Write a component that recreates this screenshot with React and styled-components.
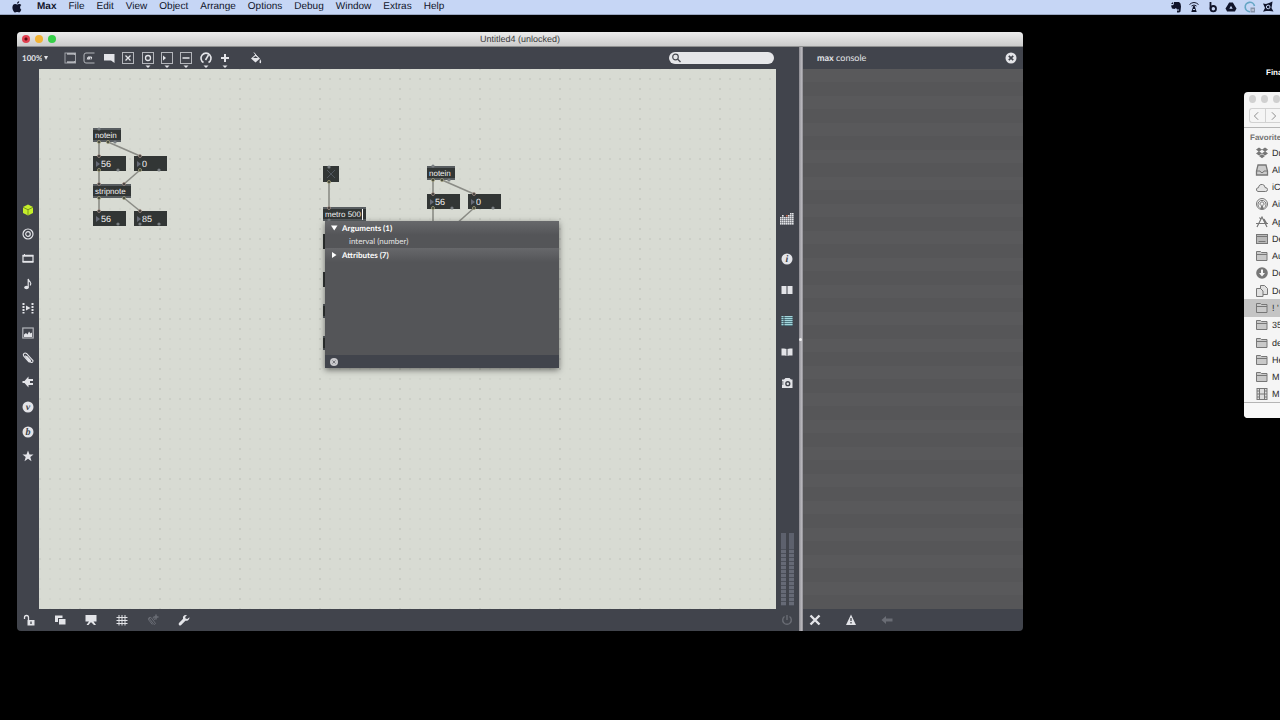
import React from "react";
import styled, { createGlobalStyle, css } from "styled-components";

const color = {
  chrome: "#41444c",
  canvas: "#d8dbd3",
  icon: "#e3e4e8",
  dim: "#6a6d75",
  node: "#323635",
  nodeEdge: "#585d60",
};
const helvetica = '"Liberation Sans", Arial, sans-serif';
const lato = 'Lato, "Open Sans", sans-serif';

const GlobalStyle = createGlobalStyle`
  * { box-sizing: border-box; }
  body { margin: 0; background: #000; font-family: ${helvetica}; overflow: hidden; text-rendering: geometricPrecision; }
  button, input, select { font: inherit; color: inherit; margin: 0; padding: 0; border: 0; background: none; outline: none; text-rendering: inherit; }
  ul { list-style: none; margin: 0; padding: 0; }
`;

const Screen = styled.div`
  display: flex;
  flex-direction: column;
  height: 100vh;
`;

/* ---------- system menu bar ---------- */
const MenuBar = styled.header`
  display: flex;
  justify-content: space-between;
  align-items: center;
  height: 15px;
  flex: none;
  padding: 0 4px 0 9px;
  background: #c6d6f5;
  border-bottom: 1px solid #9aa7c2;
  color: #10142a;
`;
const Menus = styled.nav`
  display: flex;
  align-items: center;
  gap: 12px;
  font-size: 10px;
  line-height: 14px;
`;
const MenuItem = styled.button`
  font-weight: ${(p) => (p.$app ? 700 : 400)};
  line-height: 14px;
`;
const StatusItems = styled.div`
  display: flex;
  justify-content: space-between;
  width: 108px;
`;

/* ---------- desktop ---------- */
const Desktop = styled.main`
  display: flex;
  flex: 1;
  min-height: 0;
  padding: 17px 0 89px 17px;
  gap: 221px;
`;
const Window = styled.section`
  display: flex;
  flex-direction: column;
  flex: 1;
  min-width: 0;
  border-radius: 4px;
  overflow: hidden;
  background: ${color.chrome};
`;
const TitleBar = styled.div`
  display: grid;
  grid-template-columns: 60px 1fr 60px;
  align-items: center;
  height: 15px;
  flex: none;
  background: linear-gradient(#ececec, #cbcbcb);
  border-bottom: 1px solid #8f9090;
`;
const Lights = styled.div`
  display: flex;
  gap: 5px;
  padding-left: 5px;
`;
const Light = styled.button`
  width: 8px;
  height: 8px;
  border-radius: 50%;
  background: ${(p) => p.$c};
  ${(p) => p.$dot && css`background: radial-gradient(circle, #5c0b12 0 1px, ${p.$c} 2px);`}
`;
const Title = styled.h1`
  margin: 0;
  font-size: 9px;
  line-height: 14px;
  font-weight: 400;
  color: #3c3c3c;
  text-align: center;
`;
const WindowBody = styled.div`
  display: flex;
  flex: 1;
  min-height: 0;
`;
const Patcher = styled.div`
  display: flex;
  flex-direction: column;
  flex: 1;
  min-width: 0;
`;
const Toolbar = styled.div`
  display: flex;
  align-items: center;
  height: 22px;
  flex: none;
  padding: 0 25px 0 5px;
  color: ${color.icon};
`;
const ZoomSelect = styled.select`
  appearance: none;
  width: 20px;
  font: 700 8px/12px ${lato};
`;
const ZoomCaret = styled.span`
  border: 2px solid transparent;
  border-top: 4px solid ${color.icon};
  border-bottom: 0;
  margin-left: 2px;
`;
const ObjectTools = styled.div`
  display: flex;
  justify-content: space-between;
  width: 171px;
  margin: 0 15px 0 14px;
`;
const IconButton = styled.button`
  display: block;
  width: 16px;
  height: 16px;
  flex: none;
  color: ${(p) => p.$c || "inherit"};
  svg { display: block; overflow: visible; }
`;
const SearchBox = styled.label`
  display: flex;
  align-items: center;
  width: 105px;
  height: 12px;
  margin-left: auto;
  border-radius: 6px;
  background: #e6e7e9;
  color: #4a4c52;
  svg { flex: none; }
  input { width: 80px; font-size: 8px; }
`;
const Middle = styled.div`
  display: flex;
  flex: 1;
  min-height: 0;
`;
const LeftBar = styled.div`
  display: flex;
  flex-direction: column;
  justify-content: center;
  align-items: center;
  width: 22px;
  padding-bottom: 12px;
  color: ${color.icon};
`;
const LeftTools = styled.div`
  display: flex;
  flex-direction: column;
  justify-content: space-between;
  height: 263px;
`;
const RightBar = styled.div`
  display: flex;
  flex-direction: column;
  align-items: center;
  width: 23px;
  padding: 142px 1px 3px 0;
  color: ${color.icon};
`;
const RightTools = styled.div`
  display: flex;
  flex-direction: column;
  gap: 15px;
  margin: 24px 0 auto;
`;
const Meters = styled.div`
  display: flex;
  gap: 3px;
`;
const Meter = styled.div`
  width: 5px;
  height: 73px;
  background:
    linear-gradient(#5d616d, #5d616d) 0 0 / 100% 16px no-repeat,
    repeating-linear-gradient(#4b4f59 0 1px, #666a76 1px 4px);
`;
const BottomBar = styled.div`
  display: flex;
  align-items: center;
  height: 22px;
  flex: none;
  gap: ${(p) => p.$gap}px;
  padding: 0 4px;
  color: ${color.icon};
`;
const Spacer = styled.span`
  flex: 1;
`;

/* ---------- patcher canvas ---------- */
const Canvas = styled.div`
  position: relative;
  flex: 1;
  overflow: hidden;
  background:
    radial-gradient(circle at 1px 1px, #c9ccc4 0 1px, transparent 1px) 40px 9px / 80px 10px,
    radial-gradient(circle at 1px 1px, #cccfc7 0 1px, transparent 1px) 0 9px / 10px 80px,
    radial-gradient(circle at 1px 1px, #d2d5cd 0 1px, transparent 1px) 0 9px / 10px 10px,
    ${color.canvas};
`;
const Cords = styled.svg`
  position: absolute;
  inset: 0;
  width: 100%;
  height: 100%;
`;
const placed = css`
  position: absolute;
  left: ${(p) => p.$x}px;
  top: ${(p) => p.$y}px;
`;
const ObjectBox = styled.div`
  ${placed}
  width: ${(p) => p.$w}px;
  height: 14px;
  padding-left: 2px;
  border: solid ${color.nodeEdge};
  border-width: 2px 0;
  background: ${color.node};
  color: #f2f2f2;
  font-size: 8px;
  line-height: 12px;
  white-space: nowrap;
`;
const ObjectInput = styled.input`
  display: block;
  width: 38px;
  height: 11px;
  border-right: 1px solid #fff;
`;
const NumberBox = styled.label`
  ${placed}
  display: flex;
  align-items: center;
  width: 33px;
  height: 15px;
  background: ${color.node};
  color: #f2f2f2;
  font-size: 9px;
  input { width: 24px; height: 12px; }
  &::before {
    content: "";
    margin: 0 1px 0 3px;
    border: 3px solid transparent;
    border-left: 4px solid #666a76;
    border-right: 0;
  }
`;
const ToggleBox = styled.button`
  ${placed}
  width: 16px;
  height: 16px;
  background: ${color.node};
  color: #50565e;
  svg { display: block; }
`;
const HiddenBox = styled.div`
  ${placed}
  width: 33px;
  height: 15px;
  background: ${color.node};
`;

/* ---------- argument popup ---------- */
const Popup = styled.div`
  position: absolute;
  left: 286px;
  top: 152px;
  display: flex;
  flex-direction: column;
  width: 234px;
  height: 147px;
  background: #545558;
  box-shadow: 0 2px 6px rgba(0, 0, 0, 0.5);
  color: #fff;
  font-family: ${lato};
  font-size: 8px;
`;
const PopupHeading = styled.button`
  display: flex;
  align-items: center;
  gap: 4px;
  height: 14px;
  padding-left: 5px;
  background: linear-gradient(#67686b, #545558);
  font-weight: 700;
`;
const PopupItem = styled.div`
  height: 13px;
  padding-left: 24px;
  line-height: 13px;
  color: #e4e4e4;
`;
const PopupFooter = styled.div`
  display: flex;
  align-items: center;
  height: 13px;
  margin-top: auto;
  padding-left: 1px;
  background: ${color.chrome};
`;

/* ---------- console ---------- */
const Splitter = styled.div`
  display: flex;
  align-items: center;
  width: 4px;
  background: linear-gradient(90deg, #8b8a90, #b9b8bd 60%, #8b8a90);
  &::before {
    content: "";
    width: 3px;
    height: 3px;
    border-radius: 50%;
    background: #f0f0f0;
  }
`;
const Console = styled.aside`
  display: flex;
  flex-direction: column;
  width: 220px;
`;
const ConsoleHeader = styled.div`
  display: flex;
  align-items: center;
  justify-content: space-between;
  height: 22px;
  flex: none;
  padding: 0 4px 0 14px;
  color: ${color.icon};
`;
const ConsoleTitle = styled.h2`
  margin: 0;
  font: 400 9px/12px ${lato};
`;
const ConsoleRows = styled.div`
  flex: 1;
  background: repeating-linear-gradient(#59595b 0 13px, #565658 13px 27px);
`;

/* ---------- finder ---------- */
const FinderSide = styled.div`
  display: flex;
  flex-direction: column;
  width: 36px;
  flex: none;
  padding-top: 35px;
`;
const FileLabel = styled.div`
  align-self: flex-end;
  width: 14px;
  height: 12px;
  margin-bottom: 13px;
  overflow: hidden;
  color: #fff;
  font-weight: 700;
  font-size: 8px;
  line-height: 12px;
  white-space: nowrap;
`;
const FinderWindow = styled.section`
  display: flex;
  flex-direction: column;
  overflow: hidden;
  border-radius: 4px 0 0 4px;
  background: #f5f5f5;
  color: #2c2c2c;
`;
const FinderToolbar = styled.div`
  height: 36px;
  padding-top: 3px;
  border-bottom: 1px solid #b5b5b5;
`;
const NavButtons = styled.div`
  display: flex;
  margin: 5px 0 0 5px;
  border: 1px solid #d2d2d2;
  border-right: 0;
  border-radius: 3px 0 0 3px;
  color: #8c8c8c;
  button { height: 13px; width: 17px; }
  button + button { border-left: 1px solid #d2d2d2; }
`;
const FinderHeading = styled.h2`
  margin: 0;
  height: 16px;
  padding: 4px 0 0 6px;
  font-size: 8px;
  line-height: 12px;
  color: #727272;
  white-space: nowrap;
`;
const Places = styled.ul`
  display: grid;
  grid-auto-rows: 1fr;
  height: 259px;
  margin-bottom: -1px;
`;
const Place = styled.li`
  display: flex;
  align-items: center;
  background: ${(p) => (p.$on ? "#c4c4c4" : "none")};
  a {
    display: flex;
    align-items: center;
    gap: 2px;
    padding-left: 10px;
    color: inherit;
    font-size: 9px;
    line-height: 12px;
    text-decoration: none;
    white-space: nowrap;
  }
  svg { flex: none; color: #777; }
`;
const FinderFooter = styled.div`
  height: 16px;
  border-top: 1px solid #b5b5b5;
  background: #f8f8f8;
`;

/* ---------- icons, drawn on a 16 x 16 grid ---------- */
const line = { fill: "none", stroke: "currentColor", strokeWidth: 1 };
const fill = { fill: "currentColor" };
const caret = <path d="M5.500 15.500h5L8 18z" {...fill} />;
const frame = <rect x="2.5" y="2.5" width="11" height="11" {...line} stroke="#b4b6bb" />;
const folder = (
  <g>
    <path d="M2.500 3.500h4l1 1h5.500v8H2.500z" {...line} fill="#c9c9c9" />
    <path d="M2.500 6.500h10.500" {...line} />
  </g>
);
const letterDisc = (ch) => (
  <g>
    <circle cx="8" cy="8" r="5.500" {...fill} />
    <text x="8" y="11" textAnchor="middle" fontFamily="Liberation Serif, serif" fontStyle="italic" fontWeight="700" fontSize="10" fill={color.chrome}>{ch}</text>
  </g>
);

const shapes = {
  apple: <path d="M10.200 2.200c-1.300.1-2.300 1.200-2.100 2.500 1.200 0 2.200-1.200 2.100-2.500zM12.300 10.800c-.6 1.500-1.500 2.700-2.300 2.700-.7 0-1-.4-1.900-.4s-1.200.4-1.900.4C4.900 13.500 3.400 10.800 3.400 8.500c0-2.300 1.400-3.400 2.700-3.400.9 0 1.500.5 2.100.5s1.200-.5 2.200-.5c.7 0 1.400.3 1.900 1-1.700 1-1.500 3.700 0 4.700z" {...fill} />,
  elephant: <path d="M6 3h5l1.500 1.500.5 3-.5 5q-.5 1-2 1H9v-2h2v-1H9L8 9 6.500 10 4 9.500 3 6.500l2.500-.5zM5 3v2H3z" {...fill} />,
  beacon: (
    <g>
      <path d="M3.500 5.500q4.500-4 9 0M5.500 7q2.500-2 5 0" {...line} />
      <path d="M7.300 7h1.400l2 6H5.300z" {...fill} />
      <path d="M7 10.500h2" {...line} stroke="#c6d6f5" />
    </g>
  ),
  beats: (
    <g {...line} strokeWidth="1.800">
      <path d="M5.500 3v7.500" />
      <circle cx="8.300" cy="9.700" r="2.700" />
    </g>
  ),
  drive: (
    <g>
      <path d="M6.200 3.500h3.600l3.700 6-1.600 3H4.100l-1.600-3z" {...fill} />
      <path d="M8 6.800 6.300 9.800h3.400z" fill="#c6d6f5" />
    </g>
  ),
  sync: (
    <g>
      <path d="M12.500 7A4.700 4.700 0 1 0 8 12.700" fill="none" stroke="#63a5c4" strokeWidth="1.600" />
      <rect x="8.500" y="8.500" width="4.500" height="5" fill="#8793a8" />
      <path d="M9.500 11h2.500" stroke="#e6ecfa" />
    </g>
  ),
  rotor: (
    <g>
      <path d="M3 4.500 6 5l3-1 3.500-1.500L12 6l-.5 3 2 3.500-4-.5L6 12l-3 .8L5 9z" {...fill} />
      <circle cx="8.200" cy="8" r="1.800" fill="none" stroke="#c6d6f5" />
    </g>
  ),
  object: (
    <g>
      <rect x="3" y="3" width="10.500" height="10" {...line} stroke="#9fa1a7" />
      <path d="M5 4h8.500M5 12h8.500" stroke="#b4b6bb" strokeWidth="2" />
      <path d="M5 5h7M5 11h7" stroke={color.chrome} strokeWidth=".6" />
    </g>
  ),
  message: (
    <g>
      <path d="M13.500 3H5Q3 3 3 5v6q0 2 2 2h8.500" {...line} stroke="#b4b6bb" />
      <path d="M6.300 9.500 7 7h1l-.5 2.500M8 7h2.500M8.300 9.500 9 7M10 9.500l.7-2.500" {...line} />
    </g>
  ),
  comment: <path d="M3 4h10.500v9L10 10.500H3z" {...fill} />,
  toggle: <g>{frame}<path d="m5.500 5.500 5 5m0-5-5 5" {...line} strokeWidth="1.300" /></g>,
  bang: <g>{frame}<circle cx="8" cy="8" r="2.500" {...line} strokeWidth="1.300" />{caret}</g>,
  number: <g>{frame}<path d="M4 5.500 7 8l-3 2.500z" {...fill} />{caret}</g>,
  slider: <g>{frame}<path d="M4.500 8h7" {...line} strokeWidth="1.300" />{caret}</g>,
  dial: (
    <g>
      <path d="M5.500 12.500a5 5 0 1 1 5 0" {...line} strokeWidth="1.600" />
      <path d="M7.500 10 10.500 5" {...line} strokeWidth="1.500" />
      {caret}
    </g>
  ),
  plus: <g><path d="M8 4v8M4 8h8" {...line} strokeWidth="2" />{caret}</g>,
  bucket: (
    <g>
      <path d="M7.500 4.500 12 8.500l-4.500 4L3 8.500z" {...fill} />
      <path d="M6 2.500 9.500 7" {...line} />
      <path d="M5 8 7.500 6 10 8z" fill={color.chrome} />
      <path d="M12 9q2 2.500 1 4-1 .5-1.500-.5z" {...fill} />
    </g>
  ),
  search: <g><circle cx="6.500" cy="7" r="2.800" {...line} strokeWidth="1.200" /><path d="m8.500 9 3 3" {...line} strokeWidth="1.400" /></g>,
  cube: (
    <g>
      <path d="M8 2.500 13 5v6l-5 2.500L3 11V5z" fill="#c5ee2a" />
      <path d="M3 5.300 8 7.700l5-2.400M8 7.700v5.500" fill="none" stroke="#6f8a1e" strokeWidth=".9" />
    </g>
  ),
  target: <g><circle cx="8" cy="8" r="5" {...line} strokeWidth="1.200" /><circle cx="8" cy="8" r="2.300" {...line} strokeWidth="1.200" /></g>,
  device: <g><rect x="3" y="5" width="10" height="5.500" {...line} strokeWidth="1.200" /><path d="M2.500 4.500h11M2.500 11h11" {...line} strokeWidth="1.500" /><path d="M4.500 3v1.500" {...line} /></g>,
  note: <g><ellipse cx="6.500" cy="11.500" rx="2.300" ry="1.800" {...fill} /><path d="M8.200 11.500V3q.5 2 2 3 1.200 1.500 0 3.500" {...line} strokeWidth="1.200" /></g>,
  film: <g><path d="M3.500 3v10.500M12.500 3v10.500" {...line} strokeWidth="2" strokeDasharray="2 1" /><path d="m6 5.500 4.500 2.500L6 10.500z" {...fill} /></g>,
  picture: <g><rect x="2.800" y="3" width="10.400" height="10" {...line} stroke="#b4b6bb" strokeWidth="1.200" /><path d="M4 12V9.500L6 8l1.500 1.500L9 6.500l1.500 2 1.500-1V12z" {...fill} /></g>,
  clip: <path d="m5 5.500 5.500 6.500q1.500 1 2.200 0 .8-1-.2-2L6.500 3.500q-1.500-1-2.700.2-1 1.200 0 2.500l5 5.500q1 .5 1.500 0 .5-.7 0-1.500L6.500 6" {...line} strokeWidth="1.100" />,
  plug: <path d="M2.500 7H4.500L8.500 2.500V5H13v2h-3v2h3v2H8.500v2.500L4.500 9h-2z" {...fill} />,
  vizzie: letterDisc("v"),
  beap: letterDisc("b"),
  star: <path d="m8 2.500 1.500 4h4L10.300 9l1.200 4.200L8 10.700l-3.500 2.500L5.700 9 2.500 6.500h4z" {...fill} />,
  matrix: (
    <g>
      {[0, 1, 2, 3, 4, 5, 6].map((c) =>
        [0, 1, 2, 3, 4, 5].map((r) =>
          r >= [2, 1, 2, 1, 1, 0, 0][c] ? (
            <rect key={`${c}-${r}`} x={1 + c * 2} y={2 + r * 2} width="1.600" height="1.600" fill={c === 3 && r === 1 ? "#c8684a" : "currentColor"} />
          ) : null
        )
      )}
    </g>
  ),
  info: letterDisc("i"),
  book: <g><path d="M2.500 4h5v8h-5zM8.500 4h5v8h-5z" {...fill} /></g>,
  smallBook: <g><path d="M2.500 4.500H5l2.500.500v7L6 11.500H2.500zM8.500 5l2.500-.5h2.500v7H10l-1.500.500z" {...fill} /></g>,
  list: <g><path d="M2.500 3h2v10h-2zM5.500 3h8v10h-8z" fill="#4f7b84" /><path d="M2.500 3.500h2M2.500 5.500h2M2.500 7.500h2M2.500 9.500h2M2.500 11.500h2M5.500 3.500h8M5.500 5.500h8M5.500 7.500h8M5.500 9.500h8M5.500 11.500h8" stroke="#a5d6dc" /></g>,
  camera: <g><path d="M3 4.500h2L6.500 3h4L12 4.500h1.500V13H3z" {...fill} /><circle cx="8.800" cy="8.700" r="2.600" fill={color.chrome} /><circle cx="8.800" cy="8.700" r="1.200" {...fill} /><path d="M3 7h1.500M3 9h1.500" stroke={color.chrome} /></g>,
  power: <path d="M5.500 4.500a4.300 4.300 0 1 0 5 0M8 3v5" {...line} strokeWidth="1.400" />,
  unlock: <g><path d="M6.500 8h7v5.500h-7z" {...fill} /><path d="M3.500 7V5.500q0-2 2-2t2 2V8" {...line} strokeWidth="1.300" /><path d="M10 9.500v2.500" stroke={color.chrome} strokeWidth="1.300" /></g>,
  windows: <g><path d="M3 3.500h7.500V6H6v4H3z" {...fill} /><path d="M7 7h6.500v5.500H7z" {...fill} /></g>,
  easel: <path d="M2.500 3h11v6.500H10.500l2.500 3.500h-2L8.500 10.500h-1L5.500 13h-2L6 9.500H2.500z" {...fill} />,
  grid: <path d="M5 3v10.500M8 3v10.500M11 3v10.500M2.500 5.500h11M2.500 8.500h11M2.500 11.500h11" {...line} />,
  clipPlus: <g><path d="m4 6 4.500 6q1.500 1 2-.5L6.500 6Q5 4.500 3.800 5.800q-.8 1 0 2.200l3.500 4.500M8 5l2 3" {...line} /><path d="M11 2.500v5M8.500 5h5" {...line} strokeWidth="1.500" /></g>,
  wrench: <path d="M13.500 5.200 11.300 7 9.500 6.500 9.200 5l1.800-2q-2.500-.5-3.700 1.300-.7 1.200-.2 2.500L3 11q-.8 1 0 2t2.200 0l4.200-4.300q1.500.3 2.700-.5 1.500-1.200 1.400-3z" {...fill} />,
  cross: <path d="m3.500 3.500 9 9m0-9-9 9" {...line} strokeWidth="2.400" />,
  warning: <g><path d="M8 2.500 13 13H3z" {...fill} /><path d="M8 6v3M8 10v1.500" stroke={color.chrome} strokeWidth="1.300" /></g>,
  back: <path d="M2.500 8 7 4v2.500h6.500v3H7V12z" {...fill} />,
  close: <g><circle cx="8" cy="8" r="5.500" {...fill} /><path d="m5.800 5.800 4.400 4.400m0-4.400-4.400 4.400" stroke={color.chrome} strokeWidth="1.700" /></g>,
  closeSmall: <g><circle cx="8" cy="8" r="4" fill="#c9c9cc" /><path d="m6.500 6.500 3 3m0-3-3 3" stroke="#77787d" /></g>,
  down: <path d="M2 3h13L8.500 13z" {...fill} />,
  right: <path d="M4 2v12l9-6z" {...fill} />,
  toggleX: <path d="m4 4 8 8m0-8-8 8" {...line} />,
  prev: <path d="m9.500 3-5 5 5 5" {...line} strokeWidth="1.300" />,
  next: <path d="m6.500 3 5 5-5 5" {...line} strokeWidth="1.300" />,
  dropbox: <path d="m5 2.500 3 2 3-2 3 2-2.500 2L14 8.500l-3 2-3-2-3 2-3-2 2.500-2L2 4.500zM5 11l3-1.800L11 11l-3 2.200zM8 4.800 5.300 6.500 8 8.200l2.700-1.700z" fillRule="evenodd" {...fill} />,
  tray: <g><path d="M4 3h8l1.500 6v4h-11V9z" {...line} strokeWidth="1.300" fill="#ccc" /><path d="M2.500 9H6l1 1.500h2L10 9h3.500" {...line} /></g>,
  cloud: <path d="M4 12.500q-2-.5-1.500-2.500.5-1.500 2-1.300Q5 5 8.500 5.500q2.500.5 2.500 3 2.500 0 2.500 2t-2 2z" {...line} fill="#e4e4e4" />,
  airdrop: <g {...line}><circle cx="8" cy="8" r="5.500" /><path d="M5.500 11.500a4 4 0 1 1 5 0M6.800 9.500a2 2 0 1 1 2.400 0" /><path d="m8 8-2 5h4z" fill="currentColor" stroke="none" /></g>,
  apps: <path d="M3 13 8 3l5 10M2 9.500h12M5.500 3.500l1.500 2M10 5l3 5" {...line} strokeWidth="1.200" />,
  desktop: <g><rect x="2.500" y="3.500" width="11" height="9" {...line} fill="#b9b9b9" /><path d="M3 5.500h10M4.500 10.500h7" {...line} /></g>,
  download: <g><circle cx="8" cy="8" r="5.800" {...fill} /><path d="M7 4.500h2V8h2l-3 3.500L5 8h2z" fill="#f5f5f5" /></g>,
  docs: <g {...line} fill="#e0e0e0"><path d="M6.500 2.500h4l3 3v6h-7z" /><path d="M2.500 5.500h4l2.500 2.500v5.500H2.500z" /></g>,
  folder,
  movie: <g {...line}><rect x="3" y="2.500" width="10" height="11" fill="#ddd" /><path d="M5.500 2.500v11M10.500 2.500v11M5.500 8h5M3 5h2.500M3 8h2.500M3 11h2.500M10.500 5H13M10.500 8H13M10.500 11H13" /></g>,
};

function Icon({ name, size = 16 }) {
  return (
    <svg width={size} height={size} viewBox="0 0 16 16" aria-hidden="true">
      {shapes[name]}
    </svg>
  );
}

function Tool({ name, c }) {
  return (
    <IconButton type="button" aria-label={name} $c={c}>
      <Icon name={name} />
    </IconButton>
  );
}

const tools = (names) => names.map((n) => <Tool key={n} name={n} />);

/* Patch cords run from outlet to inlet, in canvas coordinates. */
const cords = [
  [60, 73, 60, 87], [69, 73, 101, 87], [60, 101, 60, 115], [101, 101, 85, 115],
  [60, 129, 60, 142], [85, 129, 101, 142], [290, 113, 290, 139],
  [394, 111, 394, 125], [403, 111, 435, 125], [394, 139, 394, 156], [435, 139, 416, 156],
];
const spareOutlets = [[76, 73], [79, 101], [120, 101], [79, 155], [120, 155], [101, 155], [410, 111], [413, 139], [454, 139], [60, 60], [394, 97], [290, 98], [290, 151]];

const places = [
  ["dropbox", "Dr"], ["tray", "Al"], ["cloud", "iC"], ["airdrop", "Ai"], ["apps", "Ap"],
  ["desktop", "De"], ["folder", "Au"], ["download", "Do"], ["docs", "Do"], ["folder", "! '"],
  ["folder", "35"], ["folder", "de"], ["folder", "He"], ["folder", "M"], ["movie", "M"],
];

function NumberField({ x, y, value }) {
  return (
    <NumberBox $x={x} $y={y}>
      <input aria-label="number" defaultValue={value} />
    </NumberBox>
  );
}

function PatchCanvas() {
  return (
    <Canvas>
      <ObjectBox $x={54} $y={59} $w={28}>notein</ObjectBox>
      <NumberField x={54} y={87} value="56" />
      <NumberField x={95} y={87} value="0" />
      <ObjectBox $x={54} $y={115} $w={38}>stripnote</ObjectBox>
      <NumberField x={54} y={142} value="56" />
      <NumberField x={95} y={142} value="85" />

      <ToggleBox type="button" aria-label="toggle" $x={284} $y={97}><Icon name="toggleX" /></ToggleBox>
      <ObjectBox $x={284} $y={138} $w={43}>
        <ObjectInput aria-label="object text" defaultValue="metro 500" />
      </ObjectBox>
      <HiddenBox $x={284} $y={165} />
      <HiddenBox $x={284} $y={203} />
      <ObjectBox $x={284} $y={235} $w={43} />
      <ObjectBox $x={284} $y={267} $w={43} />

      <ObjectBox $x={388} $y={97} $w={28}>notein</ObjectBox>
      <NumberField x={388} y={125} value="56" />
      <NumberField x={429} y={125} value="0" />

      <Cords aria-hidden="true">
        {cords.map(([x1, y1, x2, y2]) => (
          <g key={`${x1}-${y1}-${x2}`}>
            <line x1={x1} y1={y1} x2={x2} y2={y2} stroke="#8b8c86" strokeWidth="1.600" />
            <circle cx={x1} cy={y1} r="1.500" fill={color.node} stroke="#a9a67c" strokeWidth=".8" />
            <circle cx={x2} cy={y2} r="1.500" fill={color.node} stroke="#a58f86" strokeWidth=".8" />
          </g>
        ))}
        {spareOutlets.map(([x, y]) => (
          <circle key={`${x}-${y}`} cx={x} cy={y} r="1.600" fill="#7a7f83" />
        ))}
      </Cords>

      <Popup>
        <PopupHeading type="button" aria-expanded="true"><Icon name="down" size={8} />Arguments (1)</PopupHeading>
        <PopupItem>interval (number)</PopupItem>
        <PopupHeading type="button" aria-expanded="false"><Icon name="right" size={8} />Attributes (7)</PopupHeading>
        <PopupFooter><Tool name="closeSmall" /></PopupFooter>
      </Popup>
    </Canvas>
  );
}

function MaxWindow() {
  return (
    <Window>
      <TitleBar>
        <Lights>
          <Light type="button" aria-label="close" $c="#e0404f" $dot />
          <Light type="button" aria-label="minimise" $c="#f2b233" />
          <Light type="button" aria-label="zoom" $c="#35d048" />
        </Lights>
        <Title>Untitled4 (unlocked)</Title>
      </TitleBar>
      <WindowBody>
        <Patcher>
          <Toolbar>
            <ZoomSelect aria-label="zoom level"><option>100%</option></ZoomSelect>
            <ZoomCaret />
            <ObjectTools>
              {tools(["object", "message", "comment", "toggle", "bang", "number", "slider", "dial", "plus"])}
            </ObjectTools>
            <Tool name="bucket" />
            <SearchBox><Icon name="search" /><input type="text" aria-label="search" /></SearchBox>
          </Toolbar>
          <Middle>
            <LeftBar>
              <LeftTools>
                {tools(["cube", "target", "device", "note", "film", "picture", "clip", "plug", "vizzie", "beap", "star"])}
              </LeftTools>
            </LeftBar>
            <PatchCanvas />
            <RightBar>
              <Tool name="matrix" />
              <RightTools>{tools(["info", "book", "list", "smallBook", "camera"])}</RightTools>
              <Meters><Meter /><Meter /></Meters>
            </RightBar>
          </Middle>
          <BottomBar $gap={15}>
            {tools(["unlock", "windows", "easel", "grid"])}
            <Tool name="clipPlus" c={color.dim} />
            <Tool name="wrench" />
            <Spacer />
            <Tool name="power" c={color.dim} />
          </BottomBar>
        </Patcher>
        <Splitter />
        <Console>
          <ConsoleHeader>
            <ConsoleTitle><b>max</b> console</ConsoleTitle>
            <Tool name="close" />
          </ConsoleHeader>
          <ConsoleRows />
          <BottomBar $gap={20}>
            <Tool name="cross" />
            <Tool name="warning" />
            <Tool name="back" c={color.dim} />
          </BottomBar>
        </Console>
      </WindowBody>
    </Window>
  );
}

function Finder() {
  return (
    <FinderSide>
      <FileLabel>Fina</FileLabel>
      <FinderWindow>
        <FinderToolbar>
          <Lights>
            <Light type="button" aria-label="close" $c="#d0d0d0" />
            <Light type="button" aria-label="minimise" $c="#d0d0d0" />
            <Light type="button" aria-label="zoom" $c="#d0d0d0" />
          </Lights>
          <NavButtons>
            <button type="button" aria-label="back"><Icon name="prev" size={12} /></button>
            <button type="button" aria-label="forward"><Icon name="next" size={12} /></button>
          </NavButtons>
        </FinderToolbar>
        <FinderHeading>Favorite</FinderHeading>
        <Places>
          {places.map(([icon, label], i) => (
            <Place key={i} $on={i === 9}>
              <a href="#place"><Icon name={icon} />{label}</a>
            </Place>
          ))}
        </Places>
        <FinderFooter />
      </FinderWindow>
    </FinderSide>
  );
}

export default function App() {
  return (
    <Screen>
      <GlobalStyle />
      <MenuBar>
        <Menus>
          <Icon name="apple" />
          <MenuItem $app>Max</MenuItem>
          {["File", "Edit", "View", "Object", "Arrange", "Options", "Debug", "Window", "Extras", "Help"].map((m) => (
            <MenuItem key={m}>{m}</MenuItem>
          ))}
        </Menus>
        <StatusItems>
          {["elephant", "beacon", "beats", "drive", "sync", "rotor"].map((n) => (
            <Icon key={n} name={n} />
          ))}
        </StatusItems>
      </MenuBar>
      <Desktop>
        <MaxWindow />
        <Finder />
      </Desktop>
    </Screen>
  );
}
